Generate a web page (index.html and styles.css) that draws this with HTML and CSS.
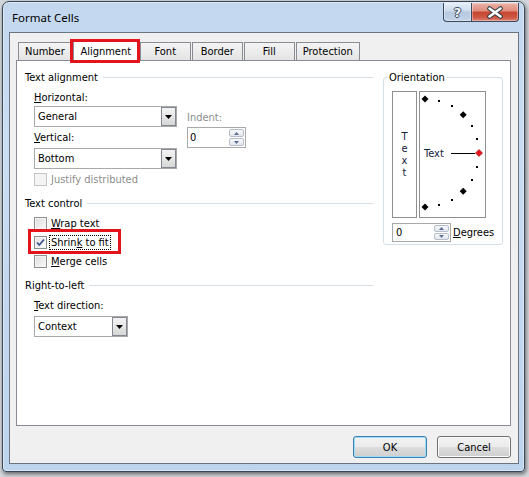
FILE: index.html
```html
<!DOCTYPE html>
<html lang="en">
<head>
<meta charset="utf-8">
<title>Format Cells</title>
<link rel="stylesheet" href="styles.css">
</head>
<body>
<div class="window">
  <div class="titlebar">
    <span class="title">Format Cells</span>
    <div class="caption">
      <span class="cap help">?</span>
      <span class="cap close">
        <svg width="18" height="13" viewBox="0 0 18 13">
          <path d="M3.5 2.5 L14.5 10.5 M14.5 2.5 L3.5 10.5" stroke="#2e3a48" stroke-width="4.6" stroke-linecap="round"/>
          <path d="M3.5 2.5 L14.5 10.5 M14.5 2.5 L3.5 10.5" stroke="#ffffff" stroke-width="2.6" stroke-linecap="round"/>
        </svg>
      </span>
    </div>
  </div>

  <div class="client">
    <div class="tabs">
      <span class="tab">Number</span>
      <span class="tab active">Alignment<span class="mark tab-mark"></span></span>
      <span class="tab">Font</span>
      <span class="tab">Border</span>
      <span class="tab">Fill</span>
      <span class="tab">Protection</span>
    </div>

    <div class="panel">
      <div class="main">
        <div class="group-title"><span>Text alignment</span></div>
        <div class="align-row">
          <div class="align-col">
            <div class="lbl"><u>H</u>orizontal:</div>
            <div class="combo wide">
              <span class="val">General</span>
              <span class="dd"><svg width="7" height="4" viewBox="0 0 7 4"><path d="M0 0 H7 L3.5 4 Z" fill="#000"/></svg></span>
            </div>
            <div class="lbl lbl-v"><u>V</u>ertical:</div>
            <div class="combo wide combo-v">
              <span class="val">Bottom</span>
              <span class="dd"><svg width="7" height="4" viewBox="0 0 7 4"><path d="M0 0 H7 L3.5 4 Z" fill="#000"/></svg></span>
            </div>
          </div>
          <div class="indent-col">
            <div class="lbl dim">Indent:</div>
            <div class="spin indent">
              <span class="val num">0</span>
              <span class="spin-btns">
                <span class="sb"><svg width="5" height="3" viewBox="0 0 5 3"><path d="M0 3 H5 L2.5 0 Z" fill="#5a6e96"/></svg></span>
                <span class="sb"><svg width="5" height="3" viewBox="0 0 5 3"><path d="M0 0 H5 L2.5 3 Z" fill="#5a6e96"/></svg></span>
              </span>
            </div>
          </div>
        </div>
        <div class="check off justify"><span class="box"></span><span class="txt">Justify distributed</span></div>

        <div class="group-title tc"><span>Text control</span></div>
        <div class="check wrap"><span class="box"></span><span class="txt"><u>W</u>rap text</span></div>
        <div class="check shrink">
          <span class="box on">
            <svg width="11" height="11" viewBox="0 0 11 11"><path d="M2 5.5 L4.3 8 L9 2.5" fill="none" stroke="#3a558c" stroke-width="1.8"/></svg>
          </span>
          <span class="txt focus">Shrin<u>k</u> to fit</span>
          <span class="mark shrink-mark"></span>
        </div>
        <div class="check merge"><span class="box"></span><span class="txt"><u>M</u>erge cells</span></div>

        <div class="group-title rtl"><span>Right-to-left</span></div>
        <div class="lbl lbl-dir"><u>T</u>ext direction:</div>
        <div class="combo ctx">
          <span class="val">Context</span>
          <span class="dd"><svg width="7" height="4" viewBox="0 0 7 4"><path d="M0 0 H7 L3.5 4 Z" fill="#000"/></svg></span>
        </div>
      </div>

      <div class="orient">
        <div class="legend">Orientation</div>
        <div class="orient-row">
          <div class="vtext"><span>T</span><span>e</span><span>x</span><span>t</span></div>
          <div class="dial">
            <svg width="65" height="125" viewBox="0 0 65 125">
              <g fill="#000">
                <path d="M5 3.5 L8.5 7 L5 10.5 L1.5 7 Z"/>
                <path d="M43.2 19.3 L46.7 22.8 L43.2 26.3 L39.7 22.8 Z"/>
                <path d="M43.2 95.7 L46.7 99.2 L43.2 102.7 L39.7 99.2 Z"/>
                <path d="M5 111.5 L8.5 115 L5 118.5 L1.5 115 Z"/>
                <rect x="18" y="8" width="2" height="2"/>
                <rect x="31" y="13" width="2" height="2"/>
                <rect x="51" y="33" width="2" height="2"/>
                <rect x="56" y="46" width="2" height="2"/>
                <rect x="56" y="74" width="2" height="2"/>
                <rect x="51" y="87" width="2" height="2"/>
                <rect x="31" y="107" width="2" height="2"/>
                <rect x="18" y="112" width="2" height="2"/>
              </g>
              <text x="4" y="65" font-family="DejaVu Sans Condensed, DejaVu Sans, sans-serif" font-size="11" fill="#14213d">Text</text>
              <path d="M31 61.5 H55" stroke="#000" stroke-width="1"/>
              <path d="M59 57.5 L62.5 61 L59 64.5 L55.5 61 Z" fill="#e8141c" stroke="#8c0d10" stroke-width="0.6"/>
            </svg>
          </div>
        </div>
        <div class="deg-row">
          <div class="spin deg">
            <span class="val num">0</span>
            <span class="spin-btns">
              <span class="sb"><svg width="5" height="3" viewBox="0 0 5 3"><path d="M0 3 H5 L2.5 0 Z" fill="#5a6e96"/></svg></span>
              <span class="sb"><svg width="5" height="3" viewBox="0 0 5 3"><path d="M0 0 H5 L2.5 3 Z" fill="#5a6e96"/></svg></span>
            </span>
          </div>
          <span class="deg-lbl"><u>D</u>egrees</span>
        </div>
      </div>
    </div>

    <div class="actions">
      <button class="btn default">OK</button>
      <button class="btn">Cancel</button>
    </div>
  </div>
</div>
</body>
</html>
```

FILE: styles.css
```css
* {
  box-sizing: border-box;
}

body {
  margin: 0;
  width: 529px;
  height: 477px;
  overflow: hidden;
  background: #d4d7db;
  font-family: "DejaVu Sans Condensed", "DejaVu Sans", sans-serif;
  font-size: 11px;
  line-height: 13px;
  color: #000;
}

u {
  text-decoration: underline;
  text-underline-offset: 1px;
}

/* ---------- window frame ---------- */
.window {
  width: 523px;
  height: 471px;
  margin: 1px 0 0 2px;
  padding: 0 5px 7px 6px;
  border: 1px solid #384658;
  border-radius: 7px 7px 4px 4px;
  background: linear-gradient(180deg, #c3d8ef 0%, #c9dcf2 30%, #bdd4ed 100%);
  display: flex;
  flex-direction: column;
  box-shadow: 1px 2px 4px rgba(0, 0, 0, 0.55), inset 0 0 0 1px rgba(255, 255, 255, 0.45);
}

.titlebar {
  height: 30px;
  flex: none;
  display: flex;
  align-items: flex-start;
  justify-content: space-between;
}

.title {
  margin: 8px 0 0 3px;
  font-family: "Noto Sans", "DejaVu Sans", sans-serif;
  font-size: 11.5px;
  line-height: 16px;
  color: #000;
}

.caption {
  display: flex;
  margin-top: 1px;
}

.cap {
  height: 19px;
  border: 1px solid #3b4a5e;
  border-top: none;
  display: flex;
  align-items: center;
  justify-content: center;
  box-shadow: inset 0 0 0 1px rgba(255, 255, 255, 0.35);
}

.help {
  width: 28px;
  border-right: none;
  border-radius: 0 0 0 4px;
  background: linear-gradient(180deg, #e4edf8 0%, #cddbec 45%, #b4c8e0 50%, #c4d5ea 100%);
  font-family: "DejaVu Sans", sans-serif;
  font-weight: bold;
  font-size: 13px;
  color: #f4f6f9;
  text-shadow: 1px 0 0 #3c4a5c, -1px 0 0 #3c4a5c, 0 1px 0 #3c4a5c, 0 -1px 0 #3c4a5c;
}

.close {
  width: 48px;
  border-radius: 0 0 4px 0;
  background: linear-gradient(180deg, #ebb3a7 0%, #df8c7b 45%, #c7452f 50%, #cf5843 80%, #df8574 100%);
}

/* ---------- client area ---------- */
.client {
  flex: 1;
  border: 1px solid #6b7482;
  background: #f0f0f0;
  padding: 7px 7px 0 6px;
  display: flex;
  flex-direction: column;
}

.tabs {
  height: 20px;
  margin-left: 2px;
  display: flex;
  align-items: flex-end;
  gap: 1px;
}

.tab {
  height: 18px;
  min-width: 51px;
  padding: 0 6px;
  border: 1px solid #898c95;
  border-bottom: none;
  background: linear-gradient(180deg, #f4f4f4 0%, #ececec 50%, #e4e4e4 100%);
  text-align: center;
  line-height: 18px;
}

.tab.active {
  position: relative;
  z-index: 1;
  min-width: 66px;
  height: 21px;
  margin-bottom: -1px;
  background: #fff;
  line-height: 21px;
}

.mark {
  position: absolute;
  border: 3px solid #e3141c;
  pointer-events: none;
}

.tab-mark {
  left: -4px;
  top: -2px;
  width: 70px;
  height: 24px;
}

.panel {
  height: 366px;
  flex: none;
  border: 1px solid #898c95;
  background: #fff;
  padding: 10px 7px 0 8px;
  display: grid;
  grid-template-columns: 348px 120px;
  column-gap: 10px;
  align-items: start;
}

/* ---------- left column ---------- */
.group-title {
  display: flex;
  align-items: center;
  height: 13px;
}

.group-title::after {
  content: "";
  flex: 1;
  height: 1px;
  margin-left: 5px;
  background: #d5dfe5;
}

.group-title.tc {
  margin-top: 11px;
}

.group-title.rtl {
  margin-top: 11px;
}

.lbl {
  height: 13px;
  white-space: nowrap;
}

.dim,
.check.off .txt {
  color: #8d8d8d;
}

.align-row {
  display: flex;
  margin: 7px 0 0 9px;
}

.align-col {
  width: 143px;
}

.combo {
  height: 21px;
  border: 1px solid #a9a9a9;
  background: #fff;
  display: flex;
  align-items: stretch;
}

.combo .val {
  flex: 1;
  padding-left: 3px;
  line-height: 19px;
}

.combo .dd {
  width: 15px;
  border: 1px solid #828790;
  background: linear-gradient(180deg, #f3f3f3 0%, #e6e6e6 50%, #d6d6d6 100%);
  display: flex;
  align-items: center;
  justify-content: center;
}

.align-col .combo {
  margin-top: 2px;
}

.lbl-v {
  margin-top: 4px;
}

.align-col .combo-v {
  margin-top: 4px;
}

.indent-col {
  margin-left: 10px;
  padding-top: 20px;
}

.spin {
  width: 59px;
  border: 1px solid #a9a9a9;
  background: #fff;
  display: flex;
  align-items: stretch;
}

.spin.indent {
  height: 21px;
  margin-top: 3px;
}

.spin .val {
  flex: 1;
  padding-left: 2px;
  display: flex;
  align-items: center;
}

.spin-btns {
  width: 15px;
  margin: 1px 1px 1px 0;
  display: flex;
  flex-direction: column;
  gap: 1px;
}

.sb {
  flex: 1;
  border: 1px solid #b7bec9;
  border-radius: 2px;
  background: linear-gradient(180deg, #f6f7f9 0%, #e3e7ee 100%);
  display: flex;
  align-items: center;
  justify-content: center;
}

.check {
  display: flex;
  align-items: center;
  height: 13px;
  margin-left: 9px;
  white-space: nowrap;
}

.check .box {
  width: 13px;
  height: 13px;
  flex: none;
  border: 1px solid #8e8f8f;
  background: linear-gradient(135deg, #dcdcdc 0%, #eeeeee 60%, #fafafa 100%);
  box-shadow: inset 0 0 0 1px #f4f4f4;
  display: flex;
  align-items: center;
  justify-content: center;
}

.check.off .box {
  border-color: #c4c4c4;
  background: #f4f4f4;
  box-shadow: none;
}

.check .box.on {
  background: linear-gradient(135deg, #e2e2e2 0%, #f2f2f2 60%, #fbfbfb 100%);
}

.check .txt {
  margin-left: 4px;
}

.check .txt.focus {
  margin-left: 2px;
  padding: 0 1px;
  height: 15px;
  line-height: 13px;
  border: 1px dotted #000;
}

.justify {
  margin-top: 4px;
}

.wrap {
  margin-top: 7px;
}

.shrink,
.merge {
  margin-top: 6px;
}

.shrink {
  position: relative;
}

.shrink-mark {
  left: -6px;
  top: -7px;
  width: 93px;
  height: 25px;
}

.lbl-dir {
  margin: 7px 0 0 9px;
}

.combo.ctx {
  width: 94px;
  margin: 4px 0 0 9px;
}

/* ---------- orientation ---------- */
.orient {
  margin-top: 6px;
  height: 168px;
  border: 1px solid #d5dfe5;
  border-radius: 3px;
  padding: 0 0 0 8px;
}

.legend {
  width: fit-content;
  height: 13px;
  margin: -7px 0 0 -4px;
  padding: 0 1px;
  background: #fff;
}

.orient-row {
  display: flex;
  gap: 2px;
  margin-top: 7px;
}

.vtext {
  width: 25px;
  height: 127px;
  border: 1px solid #8e8f8f;
  display: flex;
  flex-direction: column;
  align-items: center;
  justify-content: center;
  line-height: 12px;
  color: #14213d;
}

.dial {
  width: 67px;
  height: 127px;
  border: 1px solid #8e8f8f;
}

.dial svg {
  display: block;
}

.deg-row {
  display: flex;
  align-items: center;
  margin-top: 5px;
}

.spin.deg {
  height: 19px;
}

.spin.deg .val {
  padding-left: 3px;
}

.deg-lbl {
  margin-left: 2px;
}

/* ---------- buttons ---------- */
.actions {
  display: flex;
  justify-content: flex-end;
  gap: 10px;
  margin-top: 10px;
}

.btn {
  width: 74px;
  height: 22px;
  padding: 0;
  border: 1px solid #707070;
  border-radius: 3px;
  background: linear-gradient(180deg, #f2f2f2 0%, #ebebeb 50%, #dddddd 50%, #cfcfcf 100%);
  box-shadow: inset 0 0 0 1px #fbfbfb;
  font-family: inherit;
  font-size: 11px;
  color: #000;
}

.btn.default {
  border-color: #3c7fb1;
  box-shadow: inset 0 0 0 1px #9fdcf7;
}
```
